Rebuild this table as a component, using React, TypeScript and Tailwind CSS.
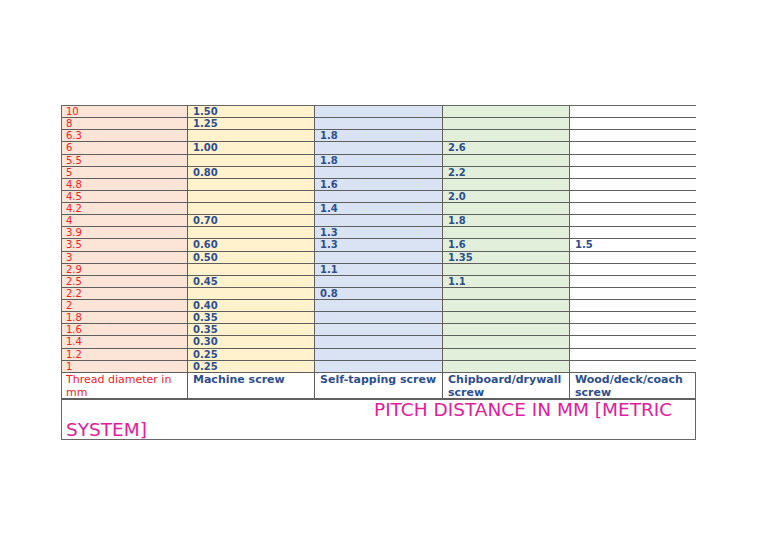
const ROWS: string[][] = [
  ['10', '1.50', '', '', ''],
  ['8', '1.25', '', '', ''],
  ['6.3', '', '1.8', '', ''],
  ['6', '1.00', '', '2.6', ''],
  ['5.5', '', '1.8', '', ''],
  ['5', '0.80', '', '2.2', ''],
  ['4.8', '', '1.6', '', ''],
  ['4.5', '', '', '2.0', ''],
  ['4.2', '', '1.4', '', ''],
  ['4', '0.70', '', '1.8', ''],
  ['3.9', '', '1.3', '', ''],
  ['3.5', '0.60', '1.3', '1.6', '1.5'],
  ['3', '0.50', '', '1.35', ''],
  ['2.9', '', '1.1', '', ''],
  ['2.5', '0.45', '', '1.1', ''],
  ['2.2', '', '0.8', '', ''],
  ['2', '0.40', '', '', ''],
  ['1.8', '0.35', '', '', ''],
  ['1.6', '0.35', '', '', ''],
  ['1.4', '0.30', '', '', ''],
  ['1.2', '0.25', '', '', ''],
  ['1', '0.25', '', '', ''],
]

// fill colour per column, same order as the data
const FILLS = ['bg-[#fce4d6]', 'bg-[#fff2cc]', 'bg-[#dae3f3]', 'bg-[#e2efda]', 'bg-white']

const GRID = 'grid grid-cols-[126px_127px_128px_127px_127px]'

function DataRow({ cells }: { cells: string[] }) {
  return (
    <div className={`${GRID} h-[12.14px] border-b border-[#5f5f5f]`}>
      {cells.map((v, i) => (
        <div
          key={i}
          className={`${FILLS[i]} overflow-hidden pl-[4px] text-[10px] leading-[12px] ${
            i < 4 ? 'border-r border-[#5f5f5f]' : ''
          } ${i === 0 ? 'text-[#ee2222]' : 'pl-[5px] font-bold text-[#2f4f8c]'}`}
        >
          {v}
        </div>
      ))}
    </div>
  )
}

export default function App() {
  const heads = ['Machine screw', 'Self-tapping screw', 'Chipboard/drywall screw', 'Wood/deck/coach screw']
  return (
    <div className="h-[543px] w-[768px] bg-white pt-[105px] pl-[61px]" style={{ fontFamily: '"DejaVu Sans", sans-serif' }}>
      <div className="w-[635px] border border-[#666]">
        {ROWS.map((r, i) => (
          <DataRow key={i} cells={r} />
        ))}
        <div className={`${GRID} h-[27px] border-b-2 border-[#5f5f5f]`}>
          <div className="border-r border-[#5f5f5f] pl-[4px] text-[11px] leading-[13px] text-[#ee2222]">
            Thread diameter in mm
          </div>
          {heads.map((h, i) => (
            <div
              key={h}
              className={`pl-[5px] text-[11px] font-bold leading-[13px] text-[#2f4f8c] ${
                i < 3 ? 'border-r border-[#5f5f5f]' : ''
              }`}
            >
              {h}
            </div>
          ))}
        </div>
        <div className="h-[39px] pl-[4px] indent-[308px] text-[18.5px] leading-[20px] text-[#e0209a]">
          PITCH DISTANCE IN MM [METRIC SYSTEM]
        </div>
      </div>
    </div>
  )
}
